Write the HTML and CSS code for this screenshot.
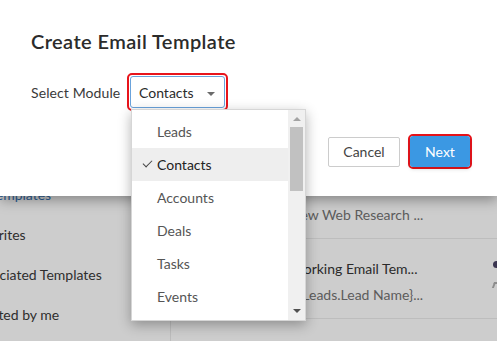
FILE: index.html
```html
<!DOCTYPE html>
<html lang="en">
<head>
    <meta charset="UTF-8">
    <meta name="viewport" content="width=device-width, initial-scale=1.0">
    <title>Create Email Template</title>
    <link rel="stylesheet" href="styles.css">
</head>
<body>

    <!-- Page behind the dialog (dimmed) -->
    <div class="page">
        <ul class="sidebar">
            <li class="active">All Templates</li>
            <li>Favorites</li>
            <li>Associated Templates</li>
            <li>Created by me</li>
        </ul>
        <div class="list">
            <div class="row">
                <div class="row-text">
                    <div class="row-title">Interview Call</div>
                    <div class="row-sub">New Web Research ...</div>
                </div>
                <div class="row-icons">
                    <span class="ic-light"></span>
                </div>
            </div>
            <div class="row">
                <div class="row-text">
                    <div class="row-title">Working Email Tem...</div>
                    <div class="row-sub">${Leads.Lead Name}...</div>
                </div>
                <div class="row-icons">
                    <span class="ic-dark"></span>
                    <span class="ic-light"></span>
                </div>
            </div>
        </div>
    </div>

    <!-- Dialog -->
    <div class="dialog">
        <h1>Create Email Template</h1>

        <div class="field">
            <label>Select Module</label>
            <div class="select-wrap">
                <div class="select">
                    <span>Contacts</span>
                    <span class="caret"></span>
                </div>
            </div>
        </div>

        <div class="actions">
            <button class="btn-cancel">Cancel</button>
            <div class="next-wrap">
                <button class="btn-next">Next</button>
            </div>
        </div>
    </div>

    <!-- Open dropdown -->
    <div class="dropdown">
        <ul class="options">
            <li>Leads</li>
            <li class="selected">Contacts</li>
            <li>Accounts</li>
            <li>Deals</li>
            <li>Tasks</li>
            <li>Events</li>
        </ul>
        <div class="scrollbar">
            <span class="arrow-up"></span>
            <span class="thumb"></span>
            <span class="arrow-down"></span>
        </div>
    </div>

</body>
</html>
```

FILE: styles.css
```css
* {
    box-sizing: border-box;
    margin: 0;
    padding: 0;
}

body {
    font-family: 'Lato', 'Liberation Sans', sans-serif;
    background-color: #cdcdcd;
    width: 497px;
    height: 341px;
    overflow: hidden;
    position: relative;
}

/* ---------- dimmed page ---------- */

.page {
    display: flex;
    height: 341px;
    margin-left: -30px;
}

.sidebar {
    list-style: none;
    width: 201px;
    padding-top: 175px;
    border-right: 1px solid #bcbcbc;
}

.sidebar li {
    height: 40px;
    line-height: 40px;
    font-size: 14px;
    color: #2e2e2e;
    white-space: nowrap;
}

.sidebar li.active {
    color: #2d5f95;
}

.list {
    flex: 1;
    padding-top: 159px;
}

.row {
    display: flex;
    height: 80px;
    border-bottom: 1px solid #bdbdbd;
}

.row-text {
    flex: 1;
    padding-left: 119px;
    padding-top: 19px;
    white-space: nowrap;
}

.row-title {
    font-size: 14px;
    color: #2a2a2a;
    height: 22px;
    line-height: 22px;
}

.row-sub {
    font-size: 14px;
    color: #5c5c5c;
    margin-top: 4px;
    line-height: 22px;
}

.row-icons {
    width: 4px;
    padding-top: 22px;
    display: flex;
    flex-direction: column;
    gap: 14px;
}

.ic-dark {
    width: 4px;
    height: 7px;
    background-color: #3a3550;
    border-radius: 4px 0 0 4px;
}

.ic-light {
    width: 4px;
    height: 6px;
    border-left: 2px solid #8d8d8d;
    border-top: 2px solid #8d8d8d;
    transform: skewX(-20deg);
}

/* ---------- dialog ---------- */

.dialog {
    position: absolute;
    top: 0;
    left: 0;
    width: 497px;
    height: 196px;
    background-color: #ffffff;
    box-shadow: 0 4px 12px rgba(0, 0, 0, 0.35);
    padding: 29px 0 0 31px;
}

h1 {
    font-size: 20px;
    font-weight: 600;
    color: #2b2b2b;
    letter-spacing: 0.4px;
    line-height: 24px;
}

.field {
    display: flex;
    align-items: center;
    margin-top: 20px;
}

label {
    font-size: 14px;
    color: #3a3a3a;
    width: 96px;
    letter-spacing: 0.1px;
}

.select-wrap {
    border: 2px solid #e8141b;
    border-radius: 5px;
    padding: 1px;
}

.select {
    width: 95px;
    height: 32px;
    border: 1px solid #6aa3dc;
    border-radius: 3px;
    display: flex;
    align-items: center;
    justify-content: space-between;
    padding: 0 9px 0 8px;
    font-size: 14px;
    color: #2b2b2b;
}

.caret {
    width: 0;
    height: 0;
    border-left: 4px solid transparent;
    border-right: 4px solid transparent;
    border-top: 4px solid #6b6b6b;
    margin-top: 3px;
}

.actions {
    display: flex;
    justify-content: flex-end;
    align-items: center;
    gap: 8px;
    margin-top: 23px;
    padding-right: 25px;
}

button {
    font-family: 'Lato', 'Liberation Sans', sans-serif;
    font-size: 14px;
    cursor: pointer;
}

.btn-cancel {
    width: 72px;
    height: 30px;
    background-color: #ffffff;
    border: 1px solid #cccccc;
    border-radius: 2px;
    color: #444444;
}

.next-wrap {
    border: 2px solid #e8141b;
    border-radius: 5px;
}

.btn-next {
    width: 60px;
    height: 31px;
    background-color: #3b98e3;
    border: none;
    border-radius: 3px;
    color: #ffffff;
    box-shadow: 0 2px 4px rgba(0, 0, 0, 0.15);
}

/* ---------- dropdown ---------- */

.dropdown {
    position: absolute;
    top: 109px;
    left: 131px;
    width: 175px;
    height: 212px;
    background-color: #ffffff;
    border: 1px solid #d6d6d6;
    box-shadow: 0 4px 12px rgba(0, 0, 0, 0.3);
    display: flex;
}

.options {
    list-style: none;
    flex: 1;
    padding-top: 5px;
}

.options li {
    height: 33px;
    line-height: 33px;
    padding-left: 25px;
    font-size: 14px;
    color: #555555;
    position: relative;
}

.options li.selected {
    background-color: #eeeeee;
    color: #222222;
}

.options li.selected::before {
    content: '';
    position: absolute;
    left: 11px;
    top: 12px;
    width: 8px;
    height: 4px;
    border-left: 1px solid #444;
    border-bottom: 1px solid #444;
    transform: rotate(-45deg);
}

.scrollbar {
    width: 17px;
    background-color: #f0f0f0;
    display: flex;
    flex-direction: column;
    align-items: center;
    position: relative;
}

.arrow-up, .arrow-down {
    width: 0;
    height: 0;
    border-left: 4px solid transparent;
    border-right: 4px solid transparent;
}

.arrow-up {
    border-bottom: 4px solid #a3a3a3;
    margin-top: 7px;
}

.arrow-down {
    border-top: 4px solid #505050;
    position: absolute;
    bottom: 7px;
}

.thumb {
    width: 13px;
    height: 64px;
    background-color: #c1c1c1;
    margin-top: 6px;
}
```
